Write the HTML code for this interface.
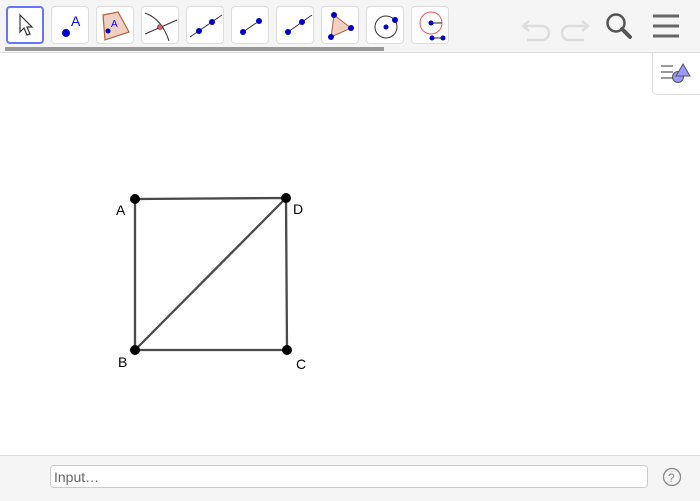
<!DOCTYPE html>
<html><head><style>
body{margin:0;width:700px;height:500px;overflow:hidden;background:#fff;font-family:"Liberation Sans",sans-serif;position:relative}
.top{position:absolute;left:0;top:0;width:700px;height:52px;background:#f5f5f5;border-bottom:1px solid #ddd}
.btn{position:absolute;top:6px;width:38px;height:38px;background:#fff;border:1px solid #ddd;border-radius:4px;box-sizing:border-box}
.btn svg{position:absolute;left:0;top:0}
.sel{border:2px solid #6774ff}
.bar{position:absolute;left:5px;top:47px;width:379px;height:4px;background:#999}
.bot{position:absolute;left:0;top:455px;width:700px;height:45px;background:#f5f5f5;border-top:1px solid #ddd}
.inp{position:absolute;left:50px;top:465px;width:598px;height:23px;box-sizing:border-box;border:1px solid #ccc;border-radius:4px;background:#fff;font-size:14px;color:#666;padding:3px 3px;line-height:16px}
.side{position:absolute;left:652px;top:53px;width:48px;height:42px;background:#fff;border-left:1px solid #ddd;border-bottom:1px solid #ddd;border-bottom-left-radius:5px;box-sizing:border-box}
</style></head><body>
<div class="top"></div>
<div class="btn sel" style="left:6px"><svg width="36" height="36"><path d="M12 7 L12 24 L16 20 L19 27 L22 26 L19 19 L24 19 Z" fill="#fff" stroke="#333" stroke-width="1.2"/></svg></div>
<div class="btn" style="left:51px"><svg width="38" height="38"><circle cx="14" cy="26" r="4" fill="#00c"/><text x="19" y="19" font-size="14" fill="#00f" font-family="Liberation Sans">A</text></svg></div>
<div class="btn" style="left:96px"><svg width="38" height="38"><path d="M6 8 L21 5 L32 25 L8 33 Z" fill="#f0d0c0" stroke="#b06040" stroke-width="1.2"/><circle cx="11" cy="24" r="2.5" fill="#00c"/><text x="14" y="20" font-size="10" fill="#00f">A</text></svg></div>
<div class="btn" style="left:141px"><svg width="38" height="38"><path d="M3 27 L35 13" stroke="#333" fill="none"/><path d="M3 6 Q20 12 27 34" stroke="#333" fill="none"/><circle cx="18" cy="20" r="2.5" fill="#e06060" stroke="#333" stroke-width=".6"/></svg></div>
<div class="btn" style="left:186px"><svg width="38" height="38"><path d="M3 30 L35 8" stroke="#333"/><circle cx="12" cy="24" r="3" fill="#00c"/><circle cx="25" cy="15" r="3" fill="#00c"/></svg></div>
<div class="btn" style="left:231px"><svg width="38" height="38"><path d="M11 25 L27 14" stroke="#333"/><circle cx="11" cy="25" r="3" fill="#00c"/><circle cx="27" cy="14" r="3" fill="#00c"/></svg></div>
<div class="btn" style="left:276px"><svg width="38" height="38"><path d="M11 25 L35 8" stroke="#333"/><circle cx="11" cy="25" r="3" fill="#00c"/><circle cx="25" cy="15" r="3" fill="#00c"/></svg></div>
<div class="btn" style="left:321px"><svg width="38" height="38"><path d="M12 8 L29 21 L9 30 Z" fill="#f0d0c0" stroke="#b06040"/><circle cx="12" cy="8" r="3" fill="#00c"/><circle cx="29" cy="21" r="3" fill="#00c"/><circle cx="9" cy="30" r="3" fill="#00c"/></svg></div>
<div class="btn" style="left:366px"><svg width="38" height="38"><circle cx="19" cy="20" r="11" fill="none" stroke="#333"/><circle cx="19" cy="20" r="2.5" fill="#00c"/><circle cx="28" cy="13" r="3" fill="#00c"/></svg></div>
<div class="btn" style="left:411px"><svg width="38" height="38"><circle cx="19" cy="16" r="11" fill="none" stroke="#f55"/><path d="M19 16 L30 16" stroke="#666" stroke-width="1.5"/><circle cx="19" cy="16" r="2.5" fill="#00c"/><path d="M20 31 L31 31" stroke="#333"/><circle cx="20" cy="31" r="2.5" fill="#00c"/><circle cx="31" cy="31" r="2.5" fill="#00c"/></svg></div>
<svg style="position:absolute;left:515px;top:8px" width="185" height="36">
<path d="M14 13 L8 18 L14 23 M8 18 H27 A7 7 0 0 1 27 32 H12" fill="none" stroke="#ddd" stroke-width="2.5"/>
<path d="M67 13 L73 18 L67 23 M73 18 H54 A7 7 0 0 0 54 32 H69" fill="none" stroke="#ddd" stroke-width="2.5"/>
<circle cx="101" cy="15" r="8.5" fill="none" stroke="#555" stroke-width="2.5"/><path d="M107 21 L115 29" stroke="#555" stroke-width="4" stroke-linecap="round"/>
<path d="M138 8 H164 M138 18 H164 M138 28 H164" stroke="#666" stroke-width="3"/>
</svg>
<div class="bar"></div>
<div class="side"><svg width="48" height="42"><path d="M8 13 H20 M8 19 H20 M8 25 H22" stroke="#999" stroke-width="2"/><circle cx="25" cy="24" r="5.5" fill="#99f" stroke="#555"/><path d="M30 11 L37 23 L23 23 Z" fill="#99f" stroke="#555" stroke-width="1"/></svg></div>
<svg style="position:absolute;left:0;top:0" width="700" height="500">
<g stroke="#4a4a4a" stroke-width="2.3" fill="none"><path d="M135 199 L286 198 L287 350 L135 350 Z M135 350 L286 198"/></g>
<g fill="#000"><circle cx="135" cy="199" r="5"/><circle cx="286" cy="198" r="5"/><circle cx="135" cy="350" r="5"/><circle cx="287" cy="350" r="5"/></g>
<g font-size="14" font-family="Liberation Sans" fill="#000"><text x="116" y="215">A</text><text x="293" y="214">D</text><text x="118" y="367">B</text><text x="296" y="369">C</text></g>
</svg>
<div class="bot"></div>
<div class="inp">Input…</div>
<svg style="position:absolute;left:662px;top:467px" width="20" height="20"><circle cx="10" cy="10" r="8.5" fill="none" stroke="#888" stroke-width="1.3"/><text x="6" y="15" font-size="12" fill="#888" font-family="Liberation Sans">?</text></svg>
</body></html>
